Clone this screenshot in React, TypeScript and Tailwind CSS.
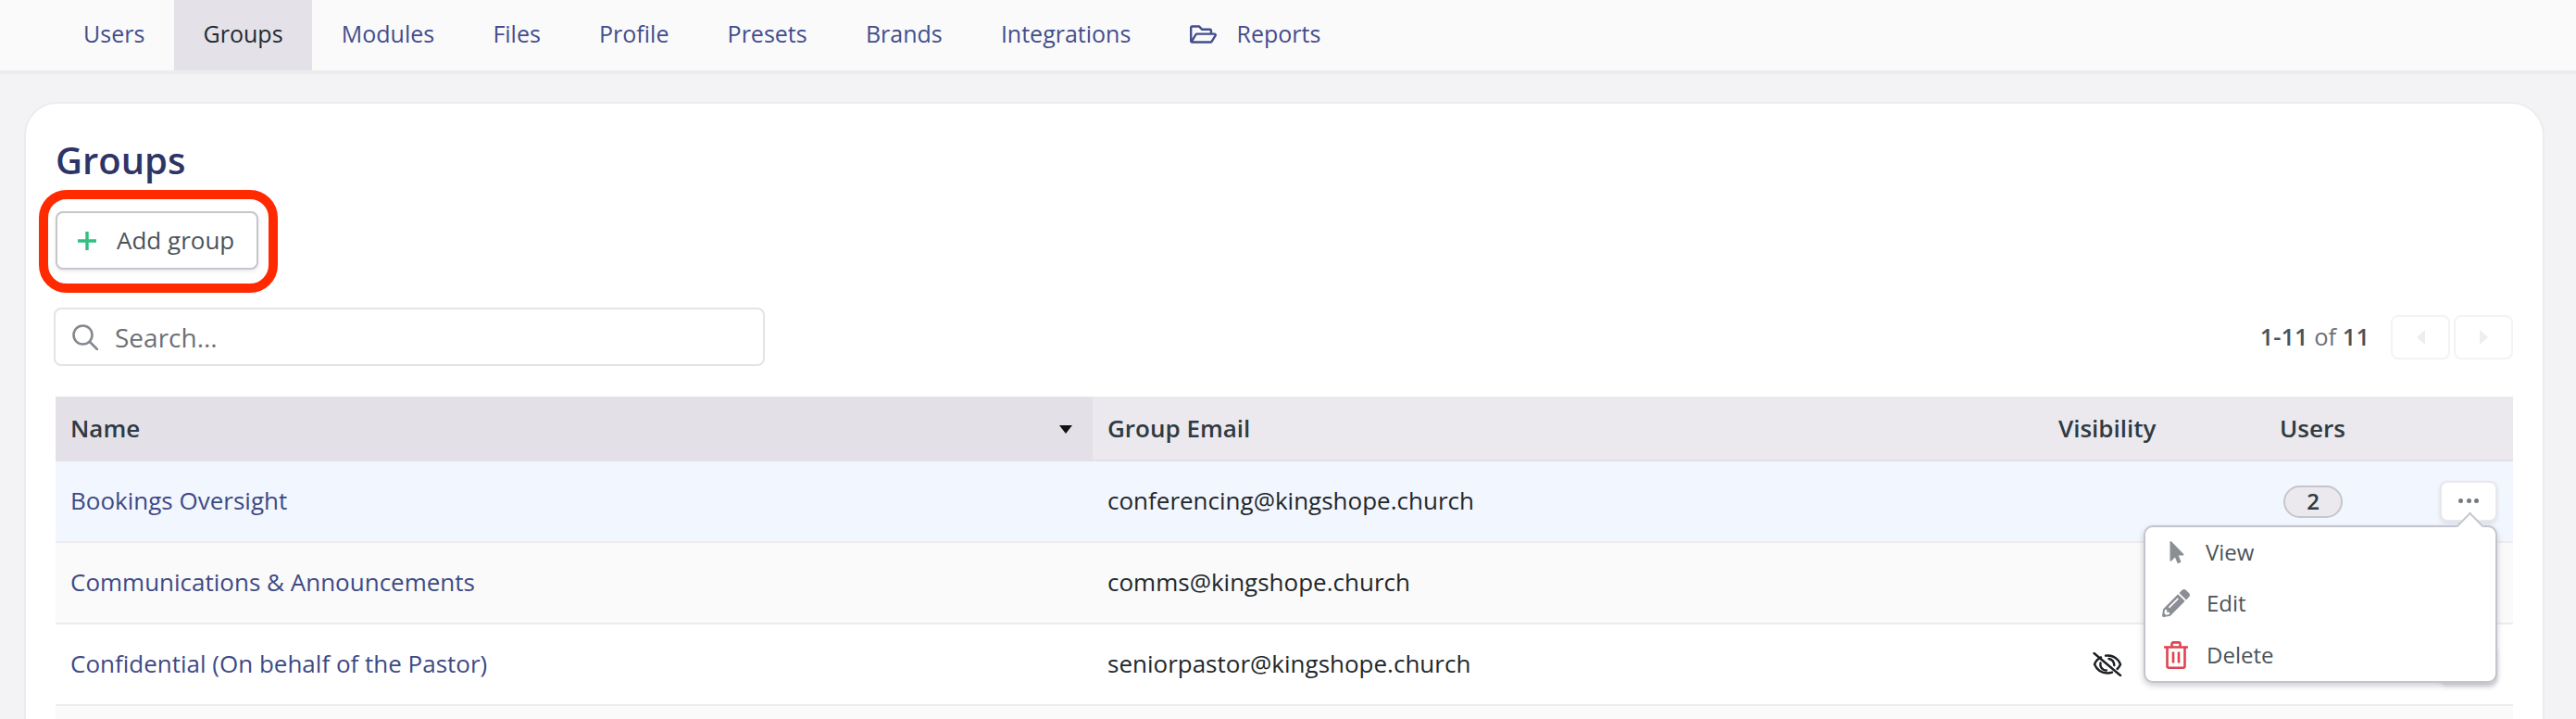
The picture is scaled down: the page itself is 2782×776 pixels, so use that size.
import { FaMousePointer, FaPencilAlt, FaRegFolderOpen } from "react-icons/fa";

const tabs = ["Users", "Groups", "Modules", "Files", "Profile", "Presets", "Brands", "Integrations"];

const rows = [
  { name: "Bookings Oversight", email: "conferencing@kingshope.church", bg: "bg-[#f2f6fe]" },
  { name: "Communications & Announcements", email: "comms@kingshope.church", bg: "bg-[#fafafa]" },
  { name: "Confidential (On behalf of the Pastor)", email: "seniorpastor@kingshope.church", bg: "bg-white" },
];

function MoreButton() {
  return (
    <button
      type="button"
      className="flex h-[44px] w-[62px] items-center justify-center gap-[3.5px] rounded-[8px] border-2 border-[#e9e7ec] bg-white pb-[2px] shadow-[0_2px_4px_rgba(120,120,140,0.2)]"
    >
      <span className="size-[5px] rounded-full bg-[#747a82]" />
      <span className="size-[5px] rounded-full bg-[#747a82]" />
      <span className="size-[5px] rounded-full bg-[#747a82]" />
    </button>
  );
}

function TrashIcon() {
  return (
    <svg viewBox="0 0 26 30" className="h-[30px] w-[26px]" fill="none" stroke="#e0434f" strokeWidth="2.6">
      <path d="M1 6.5h24" strokeLinecap="round" />
      <path d="M8.5 6V3a1.6 1.6 0 0 1 1.6-1.6h5.8A1.6 1.6 0 0 1 17.5 3v3" />
      <path d="M3.5 6.5v20.2a2 2 0 0 0 2 2h15a2 2 0 0 0 2-2V6.5" />
      <path d="M10 11.5v12M16 11.5v12" />
    </svg>
  );
}

function EyeOffIcon() {
  return (
    <svg viewBox="0 0 32 26" className="h-[26px] w-[32px]" fill="none" stroke="#1c1f23" strokeWidth="2.4" strokeLinecap="round">
      <path d="M1.5 1 30 25" />
      <path d="M9 5.4C5.8 6.8 3.4 9.5 2 13c2.600 6 8 9.500 14 9.500 1.800 0 3.500-.3 5-.9" />
      <path d="M14 3.700c.7-.1 1.300-.2 2-.2 6 0 11.400 3.500 14 9.500-.8 2-2 3.700-3.400 5" />
      <path d="M8.500 11.500c-.6 3 .6 5.700 3.200 7.200 1 .5 2 .8 3.100.8" />
      <path d="M17.500 7c3.300.8 5.700 3.400 5.800 7" />
    </svg>
  );
}

function RowMenu() {
  return (
    <div className="absolute right-[17px] top-[69px] z-10 w-[382px] rounded-[10px] border-2 border-[#c4c5cc] bg-white text-[24px] text-[#4b5359] shadow-[0_3px_6px_rgba(90,90,110,0.3)]">
      <span className="absolute -top-[12px] right-[17px] size-[21px] rotate-45 border-l-2 border-t-2 border-[#c4c5cc] bg-white" />
      <div className="relative flex h-[54px] items-center">
        <span className="flex w-[65px] justify-center pl-[2px] text-[#8b8e94]">
          <FaMousePointer className="h-[24px] w-[18px]" />
        </span>
        View
      </div>
      <div className="relative flex h-[56px] items-center">
        <span className="flex w-[66px] justify-center text-[#8b8e94]">
          <FaPencilAlt className="size-[30px]" />
        </span>
        Edit
      </div>
      <div className="relative flex h-[56px] items-center">
        <span className="flex w-[66px] justify-center">
          <TrashIcon />
        </span>
        Delete
      </div>
    </div>
  );
}

export default function App() {
  return (
    <div className="h-[776px] w-[2782px] overflow-hidden bg-[#f3f3f5] font-['Open_Sans',sans-serif]">
      <nav className="flex h-[76px] bg-[#fbfafb] pl-[58.5px] text-[25px] text-[#434e8c] shadow-[0_4px_0_#ececee]">
        {tabs.map((tab) => (
          <a
            key={tab}
            className={`flex items-center px-[31.6px] pb-[2px] ${tab === "Groups" ? "bg-[#e4e2e8] text-[#1f2a35]" : ""}`}
          >
            {tab}
          </a>
        ))}
        <a className="flex items-center gap-[22px] px-[31.6px] pb-[2px]">
          <FaRegFolderOpen className="h-[26px] w-[29px]" />
          Reports
        </a>
      </nav>

      <main className="pl-[26px] pr-[34px] pt-[34px]">
        <section className="h-[800px] rounded-t-[36px] border-2 border-[#ececee] bg-white pl-[32px] pr-[32px] pt-[37px]">
          <h1 className="text-[40px] font-semibold leading-[48px] text-[#2e3566]">Groups</h1>

          <div className="relative mt-[31px] w-[219px]">
            <button
              type="button"
              className="flex h-[63px] w-[219px] items-center gap-[22px] rounded-[8px] border-2 border-[#c5c6cc] bg-white pl-[22px] text-[26px] text-[#4b5359] shadow-[0_2px_4px_rgba(120,120,140,0.15)]"
            >
              <svg viewBox="0 0 20 20" className="size-[20px]" fill="none" stroke="#2fc082" strokeWidth="3.4">
                <path d="M10 0v20M0 10h20" />
              </svg>
              Add group
            </button>
            <span className="pointer-events-none absolute -bottom-[25px] -left-[18px] -right-[21px] -top-[23px] rounded-[30px] border-[10px] border-[#ff2a00]" />
          </div>

          <div className="mt-[41px] flex items-center justify-between">
            <div className="-ml-[2px] flex h-[63px] w-[768px] items-center gap-[18px] rounded-[8px] border-2 border-[#e5e2e8] bg-white pl-[18px] text-[28px] text-[#6b7075]">
              <svg viewBox="0 0 28 28" className="size-[28px]" fill="none" stroke="#85888e" strokeWidth="2.6" strokeLinecap="round">
                <circle cx="11.500" cy="11.500" r="10" />
                <path d="M19 19l8 8" />
              </svg>
              Search...
            </div>
            <div className="flex items-center">
              <span className="text-[25.5px] text-[#6b7075]">
                <b className="font-semibold text-[#4b5359]">1-11</b> of <b className="font-semibold text-[#4b5359]">11</b>
              </span>
              <span className="ml-[23px] flex h-[48px] w-[64px] items-center justify-center rounded-[8px] border-2 border-[#f3f3f6]">
                <svg viewBox="0 0 9 16" className="h-[16px] w-[9px]" fill="#eeeef2">
                  <path d="M9 0v16L0 8z" />
                </svg>
              </span>
              <span className="ml-[4px] flex h-[48px] w-[64px] items-center justify-center rounded-[8px] border-2 border-[#f3f3f6]">
                <svg viewBox="0 0 9 16" className="h-[16px] w-[9px]" fill="#eeeef2">
                  <path d="M0 0v16L9 8z" />
                </svg>
              </span>
            </div>
          </div>

          <div className="mt-[33px] w-[2654px] text-[26px]">
            <div className="grid h-[70px] grid-cols-[1120px_1027px_240px_267px] items-center border-b-2 border-[#e3e1e7] bg-[#ebe9ed] font-semibold text-[#2f3a42]">
              <div className="-mb-[2px] flex h-[70px] items-center justify-between bg-[#e3e1e7] pb-[2px] pl-[16px] pr-[22px]">
                Name
                <svg viewBox="0 0 14 9" className="mt-[2px] h-[9px] w-[14px]" fill="#111">
                  <path d="M0 0h14L7 9z" />
                </svg>
              </div>
              <div className="pl-[16px]">Group Email</div>
              <div className="pl-[16px]">Visibility</div>
              <div className="pl-[15px]">Users</div>
            </div>

            {rows.map((row, index) => (
              <div
                key={row.email}
                className={`grid h-[88px] grid-cols-[1120px_1027px_240px_267px] items-center border-b-2 border-[#eeebef] ${row.bg}`}
              >
                <a className="pb-[2px] pl-[16px] text-[#3e4a85]">{row.name}</a>
                <div className="pb-[2px] pl-[16px] text-[#22272b]">{row.email}</div>
                <div className="flex pl-[53px]">{index === 2 && <EyeOffIcon />}</div>
                <div className="relative flex h-full items-center text-[24px]">
                  {index === 0 && (
                    <span className="ml-[19px] flex h-[35px] w-[64px] items-center justify-center rounded-full border-2 border-[#c5c6cc] bg-[#ebe9ed] font-semibold leading-none text-[#2f3a42]">
                      2
                    </span>
                  )}
                  {index !== 1 && (
                    <div className="absolute right-[17px] top-[21px]">
                      <MoreButton />
                    </div>
                  )}
                  {index === 0 && <RowMenu />}
                </div>
              </div>
            ))}
            <div className="h-[88px] bg-[#fafafa]" />
          </div>
        </section>
      </main>
    </div>
  );
}
